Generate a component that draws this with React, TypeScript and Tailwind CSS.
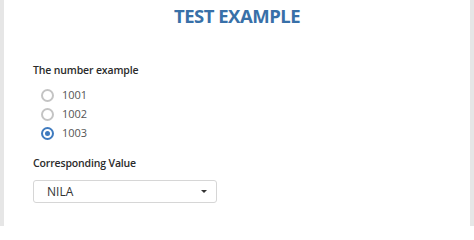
import React from "react";

const options = ["1001", "1002", "1003"];

const App = () => {
  const selected = "1003";

  return (
    <main
      className="w-[474px] h-[226px] bg-[#e6e6e6] px-[4px] overflow-hidden"
      style={{ fontFamily: '"Open Sans", sans-serif' }}
    >
      <div className="h-full bg-white pt-[3px]">
        {/* Title */}
        <h1 className="text-center text-[18.5px] leading-[26px] font-bold text-[#3870a8] tracking-[-0.5px]">
          TEST EXAMPLE
        </h1>

        <section className="pl-[29px] pt-[33px]">
          <p className="text-[10.5px] leading-[16px] font-semibold text-[#2b2b2b] tracking-[-0.15px]">
            The number example
          </p>

          {/* Radio group */}
          <div className="mt-[10px] pl-[8px] flex flex-col gap-[5px]">
            {options.map((opt) => (
              <label key={opt} className="flex items-center gap-[8px] h-[14px]">
                {opt === selected ? (
                  <span className="w-[13px] h-[13px] rounded-full border-[2px] border-[#3f7bbf] flex items-center justify-center">
                    <span className="w-[5px] h-[5px] rounded-full bg-[#3f7bbf]" />
                  </span>
                ) : (
                  <span className="w-[13px] h-[13px] rounded-full border-[2px] border-[#c4c4c4]" />
                )}
                <span className="text-[11px] text-[#555]">{opt}</span>
              </label>
            ))}
          </div>

          <p className="mt-[15px] text-[10.5px] leading-[16px] font-semibold text-[#2b2b2b] tracking-[-0.15px]">
            Corresponding Value
          </p>

          {/* Select */}
          <div className="mt-[9px] w-[184px] h-[23px] border border-[#d6d6d6] rounded-[3px] flex items-center justify-between pl-[13px] pr-[9px]">
            <span className="text-[12px] text-[#333]">NILA</span>
            <span className="w-0 h-0 border-l-[3px] border-r-[3px] border-t-[3px] border-l-transparent border-r-transparent border-t-[#333]" />
          </div>
        </section>
      </div>
    </main>
  );
};

export default App;
